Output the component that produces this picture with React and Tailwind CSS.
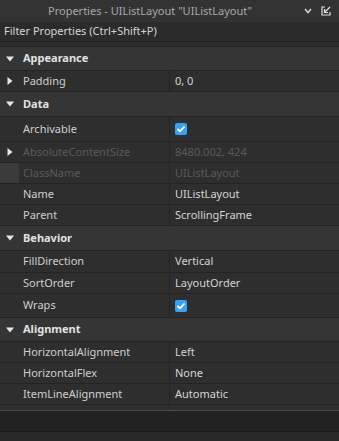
import React from 'react';

const font = { fontFamily: '"Noto Sans", "Open Sans", sans-serif' };

function Down() {
  return (
    <svg width="8" height="6" viewBox="0 0 8 6" className="shrink-0">
      <path d="M0 0.5 L8 0.5 L4 5.5 Z" fill="#e6e6e6" />
    </svg>
  );
}

function Right() {
  return (
    <svg width="6" height="8" viewBox="0 0 6 8" className="shrink-0">
      <path d="M0.5 0 L5.5 4 L0.5 8 Z" fill="#e6e6e6" />
    </svg>
  );
}

function Check() {
  return (
    <div className="w-[12px] h-[12px] rounded-[2px] bg-[#35a2f4] flex items-center justify-center">
      <svg width="10" height="8" viewBox="0 0 10 8">
        <path d="M1.5 4 L4 6.3 L8.5 1.5" stroke="#fff" strokeWidth="1.8" fill="none" />
      </svg>
    </div>
  );
}

function Header({ label, h = 'h-[24px]' }) {
  return (
    <div className={`${h} flex items-center bg-[#353535] border-b border-[#242424]`}>
      <div className="w-[23px] pl-[6px] flex items-center">
        <Down />
      </div>
      <span className="text-[11px] font-bold text-[#e2e2e2]">{label}</span>
    </div>
  );
}

function Row({ name, value, check, arrow, disabled, marker, h = 'h-[21px]' }) {
  const nameColor = disabled ? 'text-[#5a5a5a]' : 'text-[#cfcfcf]';
  const valColor = disabled ? 'text-[#5a5a5a]' : 'text-[#d4d4d4]';
  return (
    <div className={`${h} flex bg-[#2e2e2e] border-b border-[#242424]`}>
      <div className={`w-[19px] flex items-center pl-[7px] ${marker ? 'bg-[#3b3b3b]' : ''}`}>
        {arrow && <Right />}
      </div>
      <div className={`w-[150px] flex items-center pl-[4px] text-[11px] ${nameColor}`}>{name}</div>
      <div className="flex-1 flex items-center pl-[5px] border-l border-[#242424]">
        {check ? <Check /> : <span className={`text-[11px] ${valColor}`}>{value}</span>}
      </div>
    </div>
  );
}

export default function App() {
  return (
    <div className="w-[339px] h-[441px] bg-[#2e2e2e] overflow-hidden flex flex-col" style={font}>
      {/* title bar */}
      <div className="h-[22px] bg-[#333333] flex items-center relative">
        <span className="absolute left-[48px] text-[11px] text-[#a8a8a8]">Properties - UIListLayout "UIListLayout"</span>
        <div className="ml-auto flex items-center gap-[9px] pr-[8px]">
          <svg width="8" height="6" viewBox="0 0 8 6">
            <path d="M1 1 L4 4.5 L7 1" stroke="#d0d0d0" strokeWidth="1.6" fill="none" />
          </svg>
          <svg width="10" height="10" viewBox="0 0 10 10">
            <path d="M4 1 L1 1 L1 9 L9 9 L9 6" stroke="#e0e0e0" strokeWidth="1.2" fill="none" />
            <path d="M9 1 L4 6 M3.5 3 L3.5 6.5 L7 6.5" stroke="#e0e0e0" strokeWidth="1.2" fill="none" />
          </svg>
        </div>
      </div>
      {/* filter */}
      <div className="h-[20px] bg-[#2b2b2b] border-b border-[#1e1e1e] flex items-center pl-[4px]">
        <span className="text-[11px] text-[#d6d6d6]">Filter Properties (Ctrl+Shift+P)</span>
      </div>
      <div className="h-[5px] bg-[#2b2b2b] border-b border-[#242424]" />

      <Header label="Appearance" h="h-[24px]" />
      <Row name="Padding" value="0, 0" arrow />
      <Header label="Data" h="h-[25px]" />
      <Row name="Archivable" check h="h-[25px]" />
      <Row name="AbsoluteContentSize" value="8480.002, 424" arrow disabled />
      <Row name="ClassName" value="UIListLayout" disabled marker />
      <Row name="Name" value="UIListLayout" />
      <Row name="Parent" value="ScrollingFrame" />
      <Header label="Behavior" h="h-[25px]" />
      <Row name="FillDirection" value="Vertical" h="h-[22px]" />
      <Row name="SortOrder" value="LayoutOrder" />
      <Row name="Wraps" check h="h-[24px]" />
      <Header label="Alignment" h="h-[24px]" />
      <Row name="HorizontalAlignment" value="Left" />
      <Row name="HorizontalFlex" value="None" />
      <Row name="ItemLineAlignment" value="Automatic" />
      <div className="h-[6px] flex bg-[#2e2e2e] border-b border-[#4a4a4a]">
        <div className="w-[169px]" />
        <div className="flex-1 border-l border-[#242424]" />
      </div>
      <div className="h-[21px] bg-[#222222] border-b border-[#1a1a1a]" />
      <div className="flex-1 bg-[#282828]" />
    </div>
  );
}
